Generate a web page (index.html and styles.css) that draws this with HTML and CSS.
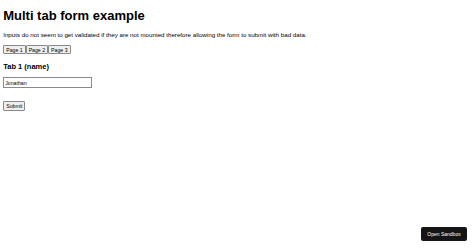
FILE: index.html
```html
<!DOCTYPE html>
<html>
<head>
<meta charset="utf-8">
<link rel="stylesheet" href="styles.css">
</head>
<body class="page">
  <h1 class="title">Multi tab form example</h1>
  <p class="intro">Inputs do not seem to get validated if they are not mounted therefore allowing the form to submit with bad data.</p>
  <div class="tabs">
    <button class="btn">Page 1</button><button class="btn">Page 2</button><button class="btn">Page 3</button>
  </div>
  <form class="form">
    <h3 class="tab-title">Tab 1 (name)</h3>
    <input class="field" type="text" value="Jonathan">
    <div class="actions">
      <button class="btn" type="button">Submit</button>
    </div>
  </form>
  <a class="sandbox">Open Sandbox</a>
</body>
</html>
```
FILE: styles.css
```css
html, body { background: #fff; }
.page {
  margin: 3.2px;
  font-family: "Liberation Sans", Arial, sans-serif;
  color: #000;
}
.title {
  font-size: 13px;
  font-weight: bold;
  margin: 4.6px 0 8.6px;
}
.intro {
  font-size: 6.2px;
  margin: 6.4px 0;
}
.tabs { display: flex; }
.btn {
  font-family: "Liberation Sans", Arial, sans-serif;
  font-size: 5.2px;
  padding: 0.8px 2px;
  border: 0.8px solid #8a8a8a;
  border-radius: 1px;
  background: #efefef;
  color: #000;
  line-height: normal;
  margin: 0;
}
.form { margin: 0; }
.tab-title {
  font-size: 7.5px;
  font-weight: bold;
  margin: 7.5px 0 6.5px;
}
.field {
  display: block;
  width: 85px;
  font-family: "Liberation Sans", Arial, sans-serif;
  font-size: 5.2px;
  padding: 1.2px 1px;
  border: 0.8px solid #8a8a8a;
  margin: 0;
}
.actions { margin-top: 6px; }
.sandbox {
  position: fixed;
  right: 7px;
  bottom: 7px;
  width: 46px;
  height: 14px;
  display: flex;
  align-items: center;
  justify-content: center;
  background: #151515;
  color: #fff;
  font-size: 5px;
  border-radius: 2px;
}
```
